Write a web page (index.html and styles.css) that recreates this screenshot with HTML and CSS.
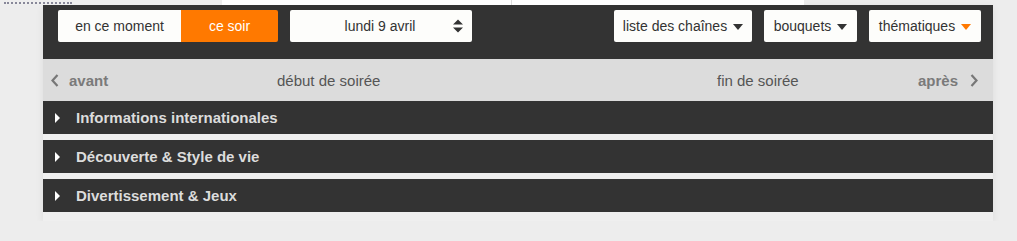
FILE: index.html
```html
<!DOCTYPE html>
<html lang="fr">
<head>
<meta charset="utf-8">
<title>Programme TV</title>
<link rel="stylesheet" href="styles.css">
</head>
<body>
<div class="topstrip">
  <div class="ts-left"><span class="ts-dots"></span></div>
  <div class="ts-white"></div>
  <div class="ts-line"></div>
  <div class="ts-white2"></div>
</div>
<div class="panel">
  <div class="toolbar">
    <div class="seg">
      <button class="btn seg-a">en ce moment</button>
      <button class="btn seg-b">ce soir</button>
    </div>
    <div class="btn date">lundi 9 avril
      <svg class="spin" width="10" height="14" viewBox="0 0 10 14"><path d="M0 5.5 L5 0.5 L10 5.5 Z M0 8.5 L5 13.5 L10 8.5 Z" fill="#333"/></svg>
    </div>
    <div class="right">
      <button class="btn dd dd1">liste des chaînes <span class="tri"></span></button>
      <button class="btn dd dd2">bouquets <span class="tri"></span></button>
      <button class="btn dd dd3">thématiques <span class="tri orange"></span></button>
    </div>
  </div>
  <div class="navbar">
    <div class="nav-prev">
      <svg width="8" height="13" viewBox="0 0 8 13"><polyline points="6.5,1 1.5,6.5 6.5,12" fill="none" stroke="#777" stroke-width="2.2"/></svg>
      <span>avant</span>
    </div>
    <div class="nav-label">début de soirée</div>
    <div class="nav-label">fin de soirée</div>
    <div class="nav-next">
      <span>après</span>
      <svg width="8" height="13" viewBox="0 0 8 13"><polyline points="1.5,1 6.5,6.5 1.5,12" fill="none" stroke="#777" stroke-width="2.2"/></svg>
    </div>
  </div>
  <div class="cats">
    <div class="cat"><span class="arrow"></span>Informations internationales</div>
    <div class="cat"><span class="arrow"></span>Découverte &amp; Style de vie</div>
    <div class="cat"><span class="arrow"></span>Divertissement &amp; Jeux</div>
  </div>
</div>
</body>
</html>
```

FILE: styles.css
```css
* { box-sizing: border-box; }
html, body {
  margin: 0;
  padding: 0;
  background: #ededed;
  font-family: "Liberation Sans", Arial, sans-serif;
  font-size: 14px;
  color: #333;
}
.topstrip {
  display: flex;
  height: 5px;
}
.ts-left {
  width: 222px;
  background: #eeeeee;
  position: relative;
}
.ts-dots {
  position: absolute;
  left: 4px;
  top: 2px;
  width: 68px;
  height: 2px;
  border-top: 2px dotted #889;
}
.ts-white { width: 289px; background: #fff; }
.ts-line { width: 1px; background: #ddd; }
.ts-white2 { width: 292px; background: #fff; }

.panel {
  margin-left: 43px;
  width: 950px;
  background: #efefef;
  padding-bottom: 9px;
  box-shadow: 0 2px 8px rgba(0,0,0,0.07);
}
.toolbar {
  background: #333;
  height: 54px;
  padding: 5px 12px 17px 15px;
  display: flex;
  align-items: stretch;
}
.btn {
  font-family: inherit;
  font-size: 14px;
  color: #333;
  background: #fdfdfb;
  border: 0;
  border-radius: 2px;
  height: 32px;
  padding: 0;
  margin: 0;
  display: flex;
  align-items: center;
  justify-content: center;
}
.seg { display: flex; }
.seg-a {
  width: 123px;
  border-radius: 2px 0 0 2px;
}
.seg-b {
  width: 97px;
  background: #ff7900;
  color: #fff;
  border-radius: 0 2px 2px 0;
}
.date {
  width: 182px;
  margin-left: 12px;
  position: relative;
  padding-right: 2px;
}
.spin {
  position: absolute;
  right: 9px;
  top: 9px;
}
.right {
  margin-left: auto;
  display: flex;
  gap: 12px;
}
.dd { gap: 6px; }
.dd1 { width: 138px; }
.dd2 { width: 93px; }
.dd3 { width: 112px; }
.tri {
  display: inline-block;
  width: 0;
  height: 0;
  border-left: 5.5px solid transparent;
  border-right: 5.5px solid transparent;
  border-top: 6px solid #333;
  margin-top: 1px;
}
.tri.orange { border-top-color: #ff7900; }

.navbar {
  background: #dcdcdc;
  height: 42px;
  display: grid;
  grid-template-columns: 234px 440px 1fr auto;
  align-items: center;
  padding-right: 15px;
  font-size: 15px;
}
.nav-prev {
  display: flex;
  align-items: center;
  padding-left: 8px;
  gap: 10px;
  font-weight: bold;
  color: #7a7a7a;
}
.nav-next {
  display: flex;
  align-items: center;
  gap: 12px;
  font-weight: bold;
  color: #7a7a7a;
}
.nav-label { color: #555; }

.cats {
  display: flex;
  flex-direction: column;
  gap: 6px;
}
.cat {
  background: #333;
  height: 33px;
  display: flex;
  align-items: center;
  padding-left: 12px;
  color: #dcdcdc;
  font-weight: bold;
  font-size: 15px;
}
.arrow {
  width: 0;
  height: 0;
  border-top: 5px solid transparent;
  border-bottom: 5px solid transparent;
  border-left: 5px solid #fff;
  margin-right: 16px;
}
```
